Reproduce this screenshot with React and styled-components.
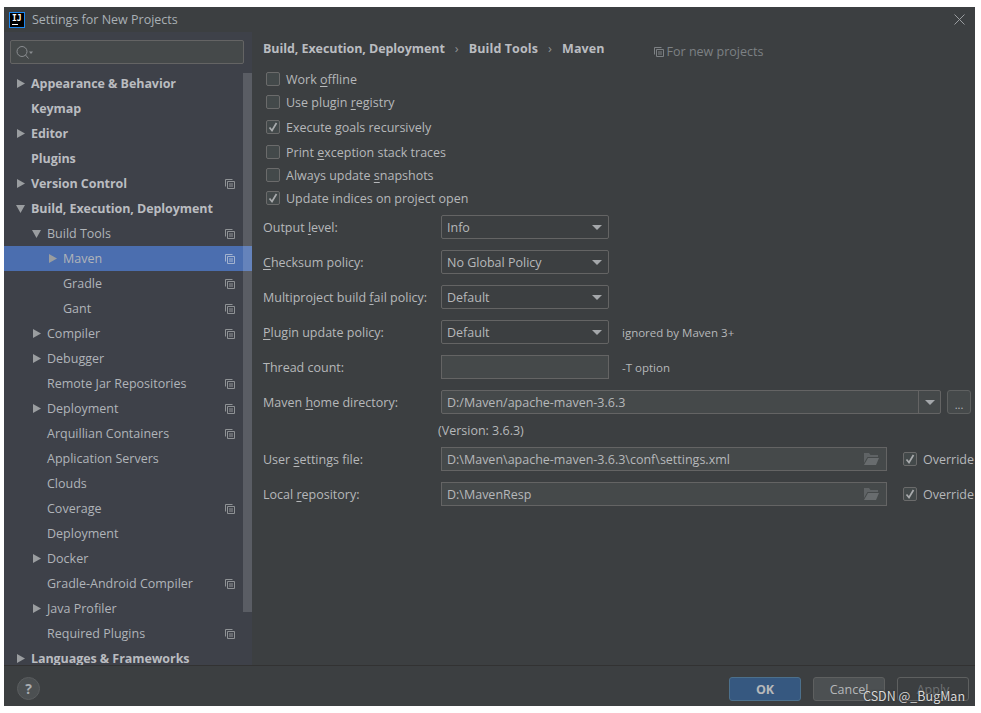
import React from "react";
import styled, { createGlobalStyle } from "styled-components";

const GlobalStyle = createGlobalStyle`
  html, body {
    margin: 0;
    padding: 0;
    background: #fff;
    height: 100%;
    overflow: hidden;
  }
  * {
    box-sizing: border-box;
  }
`;

const treeItems = [
  { label: "Appearance & Behavior", level: 0, bold: true, arrow: "right" },
  { label: "Keymap", level: 0, bold: true },
  { label: "Editor", level: 0, bold: true, arrow: "right" },
  { label: "Plugins", level: 0, bold: true },
  { label: "Version Control", level: 0, bold: true, arrow: "right", copy: true },
  { label: "Build, Execution, Deployment", level: 0, bold: true, arrow: "down" },
  { label: "Build Tools", level: 1, arrow: "down", copy: true },
  { label: "Maven", level: 2, arrow: "right", copy: true, selected: true },
  { label: "Gradle", level: 2, copy: true },
  { label: "Gant", level: 2, copy: true },
  { label: "Compiler", level: 1, arrow: "right", copy: true },
  { label: "Debugger", level: 1, arrow: "right" },
  { label: "Remote Jar Repositories", level: 1, copy: true },
  { label: "Deployment", level: 1, arrow: "right", copy: true },
  { label: "Arquillian Containers", level: 1, copy: true },
  { label: "Application Servers", level: 1 },
  { label: "Clouds", level: 1 },
  { label: "Coverage", level: 1, copy: true },
  { label: "Deployment", level: 1 },
  { label: "Docker", level: 1, arrow: "right" },
  { label: "Gradle-Android Compiler", level: 1, copy: true },
  { label: "Java Profiler", level: 1, arrow: "right" },
  { label: "Required Plugins", level: 1, copy: true },
  { label: "Languages & Frameworks", level: 0, bold: true, arrow: "right" },
];

const FONT = `"Open Sans", "Noto Sans", sans-serif`;

const Page = styled.div`
  width: 981px;
  height: 713px;
  padding: 7px 6px 7px 4px;
  position: relative;
  font-family: ${FONT};
  font-size: 12.5px;
  color: #b6b8ba;
`;

const Dialog = styled.div`
  width: 971px;
  height: 699px;
  background: #3c3f41;
  display: flex;
  flex-direction: column;
  overflow: hidden;
`;

const TitleBar = styled.div`
  height: 25px;
  flex: none;
  display: flex;
  align-items: center;
  padding: 0 10px 0 5px;
  gap: 7px;
`;

const Logo = styled.div`
  width: 16px;
  height: 16px;
  background: #000;
  border: 1px solid #1c87f0;
  color: #fff;
  font: bold 8px/9px "DejaVu Sans Mono", monospace;
  padding: 1px 0 0 2px;
  position: relative;
  &::after {
    content: "";
    position: absolute;
    left: 2px;
    bottom: 2px;
    width: 6px;
    height: 1px;
    background: #fff;
  }
`;

const Title = styled.div`
  flex: 1;
  font-size: 12.5px;
  margin-top: -1px;
  color: #a9b0b5;
`;

const Body = styled.div`
  flex: 1;
  min-height: 0;
  display: flex;
`;

const Sidebar = styled.div`
  width: 248px;
  flex: none;
  background: #3e4149;
  padding-top: 8px;
  position: relative;
  overflow: hidden;
`;

const SearchBox = styled.div`
  height: 24px;
  width: 234px;
  margin: 0 0 7px 6px;
  background: #45494a;
  border: 1px solid #646464;
  border-radius: 2px;
  display: flex;
  align-items: center;
  padding-left: 5px;
`;

const Row = styled.div`
  height: 25px;
  display: flex;
  align-items: center;
  padding-left: ${(p) => 12 + p.$level * 16}px;
  padding-right: 17px;
  background: ${(p) => (p.$selected ? "#4b6eaf" : "transparent")};
  font-weight: ${(p) => (p.$bold ? 700 : 400)};
  letter-spacing: ${(p) => (p.$bold ? "-0.07px" : "0")};
  color: ${(p) => (p.$bold ? "#babcc0" : "#b0b4b9")};
`;

const ArrowSlot = styled.span`
  width: 15px;
  flex: none;
  display: flex;
  align-items: center;
`;

const RowLabel = styled.span`
  flex: 1;
  white-space: nowrap;
`;

const ScrollThumb = styled.div`
  position: absolute;
  left: 239px;
  top: 41px;
  width: 9px;
  height: 539px;
  background: rgba(255, 255, 255, 0.15);
`;

const Content = styled.div`
  flex: 1;
  min-width: 0;
  padding-left: 11px;
  overflow: hidden;
`;

const Header = styled.div`
  height: 32px;
  margin-bottom: 4px;
  display: flex;
  align-items: center;
  white-space: nowrap;
`;

const Crumb = styled.span`
  font-weight: 700;
  letter-spacing: ${(p) => (p.$tight ? "-0.07px" : "0.1px")};
  color: #babcc0;
`;

const CrumbSep = styled.span`
  width: 24px;
  text-align: center;
  color: #8d9194;
  font-size: 13px;
`;

const ProjectNote = styled.span`
  margin-left: 49px;
  margin-top: 7px;
  display: flex;
  align-items: center;
  gap: 3px;
  color: #7d8184;
`;

const CheckRow = styled.label`
  height: 22px;
  margin-top: ${(p) => p.$mt || 0}px;
  margin-left: ${(p) => (p.$inline ? 0 : 3)}px;
  display: flex;
  align-items: center;
  gap: 6px;
  white-space: nowrap;
`;

const Box = styled.span`
  width: 14px;
  height: 14px;
  flex: none;
  border: 1px solid #6b6b6b;
  border-radius: 2px;
  background: #43494a;
  display: flex;
  align-items: center;
  justify-content: center;
`;

const Mn = styled.u`
  text-underline-offset: 2px;
  text-decoration-thickness: 1px;
`;

const Form = styled.div`
  margin-top: 6px;
`;

const FormRow = styled.div`
  height: 24px;
  margin-bottom: 11px;
  display: flex;
  align-items: center;
  white-space: nowrap;
`;

const Label = styled.div`
  width: 178px;
  flex: none;
`;

const Field = styled.div`
  width: ${(p) => p.$width}px;
  height: 24px;
  flex: none;
  background: ${(p) => (p.$flat ? "#3c3f41" : "#45494a")};
  border: 1px solid #646464;
  border-radius: ${(p) => (p.$square ? 0 : 2)}px;
  display: flex;
  align-items: center;
  padding-left: 5px;
`;

const FieldText = styled.span`
  flex: 1;
`;

const ComboArrow = styled.span`
  width: 22px;
  height: 100%;
  flex: none;
  display: flex;
  align-items: center;
  justify-content: center;
  border-left: ${(p) => (p.$divided ? "1px solid #646464" : "none")};
`;

const Hint = styled.span`
  margin-left: 13px;
  font-size: 11.5px;
`;

const Browse = styled.div`
  width: 24px;
  height: 24px;
  flex: none;
  margin-left: 6px;
  background: #45494a;
  border: 1px solid #5e6060;
  border-radius: 3px;
  display: flex;
  align-items: center;
  justify-content: center;
  padding-top: 4px;
  font-size: 11px;
`;

const VersionRow = styled.div`
  height: 22px;
  margin: -6px 0 6px 175px;
  display: flex;
  align-items: center;
`;

const FolderSlot = styled.span`
  width: 22px;
  flex: none;
  display: flex;
  align-items: center;
`;

const OverrideWrap = styled.div`
  margin-left: 16px;
`;

const Footer = styled.div`
  height: 41px;
  flex: none;
  border-top: 1px solid #323232;
  padding: 11px 6px 0 13px;
  display: flex;
  align-items: flex-start;
  gap: 12px;
`;

const HelpButton = styled.div`
  width: 23px;
  height: 23px;
  border-radius: 50%;
  background: #4c5052;
  border: 1px solid #5a5d5f;
  margin-right: auto;
  display: flex;
  align-items: center;
  justify-content: center;
  font-weight: 700;
  font-size: 14px;
  color: #a9adb0;
`;

const Button = styled.div`
  width: 72px;
  height: 24px;
  border-radius: 3px;
  display: flex;
  align-items: center;
  justify-content: center;
  background: ${(p) => (p.$kind === "ok" ? "#365880" : p.$kind === "off" ? "#3c3f41" : "#4c5052")};
  border: 1px solid ${(p) => (p.$kind === "ok" ? "#4c708c" : "#5e6060")};
  color: ${(p) => (p.$kind === "off" ? "#6f7274" : "#b6b8ba")};
  font-weight: ${(p) => (p.$kind === "ok" ? 700 : 400)};
`;

const Watermark = styled.div`
  position: absolute;
  left: 863px;
  top: 687px;
  font-family: "Noto Sans CJK SC", "Noto Sans", sans-serif;
  font-size: 12.5px;
  line-height: 18px;
  color: #d8d8d8;
  text-shadow: 0 0 2px #222;
  white-space: nowrap;
`;

const Arrow = ({ dir }) => (
  <svg width="9" height="9" viewBox="0 0 9 9">
    {dir === "down" ? (
      <path d="M0 1h9L4.5 9z" fill="#9a9da0" />
    ) : (
      <path d="M1 0l8 4.5L1 9z" fill="#9a9da0" />
    )}
  </svg>
);

const CopyIcon = ({ color = "#8f9295" }) => (
  <svg width="10" height="10" viewBox="0 0 10 10" fill="none" stroke={color} strokeWidth="1">
    <path d="M.5 7.5V.5h7" />
    <path d="M2.5 2.5h7v7h-7z" />
    <path d="M4 5h4M4 7h4" />
  </svg>
);

const Caret = ({ color = "#a4a7aa" }) => (
  <svg width="10" height="5" viewBox="0 0 10 5">
    <path d="M0 0h10L5 5z" fill={color} />
  </svg>
);

const SearchIcon = () => (
  <svg width="18" height="13" viewBox="0 0 18 13" fill="none">
    <circle cx="6" cy="5.5" r="5" stroke="#8a8d90" />
    <path d="M9.5 9l3 3.5" stroke="#8a8d90" />
    <path d="M13 5.5h4l-2 2.5z" fill="#8a8d90" />
  </svg>
);

const CheckMark = () => (
  <svg width="10" height="10" viewBox="0 0 10 10" fill="none">
    <path d="M1.5 5.5L4 8.5 8.5 1" stroke="#a9abad" strokeWidth="1.7" />
  </svg>
);

const FolderIcon = () => (
  <svg width="15" height="12" viewBox="0 0 15 12">
    <path d="M0 0h5l1.5 2H14v2H3.5L0 10z" fill="#5f6365" />
    <path d="M4 5h11l-3 7H0z" fill="#686c6e" />
  </svg>
);

const CloseIcon = () => (
  <svg width="11" height="11" viewBox="0 0 11 11" stroke="#9a9da0" strokeWidth="1">
    <path d="M.5.5l10 10M10.5.5l-10 10" />
  </svg>
);

const Check = ({ checked, mt, inline, children }) => (
  <CheckRow $mt={mt} $inline={inline}>
    <Box>{checked && <CheckMark />}</Box>
    <span>{children}</span>
  </CheckRow>
);

const Combo = ({ value, hint }) => (
  <>
    <Field $width={168} $flat>
      <FieldText>{value}</FieldText>
      <ComboArrow>
        <Caret />
      </ComboArrow>
    </Field>
    {hint && <Hint>{hint}</Hint>}
  </>
);

const PathField = ({ value }) => (
  <>
    <Field $width={446} $square>
      <FieldText>{value}</FieldText>
      <FolderSlot>
        <FolderIcon />
      </FolderSlot>
    </Field>
    <OverrideWrap>
      <Check checked inline>
        Override
      </Check>
    </OverrideWrap>
  </>
);

export default function App() {
  return (
    <Page>
      <GlobalStyle />
      <Dialog>
        <TitleBar>
          <Logo>IJ</Logo>
          <Title>Settings for New Projects</Title>
          <CloseIcon />
        </TitleBar>
        <Body>
          <Sidebar>
            <SearchBox>
              <SearchIcon />
            </SearchBox>
            {treeItems.map((item, i) => (
              <Row key={i} $level={item.level} $bold={item.bold} $selected={item.selected}>
                <ArrowSlot>{item.arrow && <Arrow dir={item.arrow} />}</ArrowSlot>
                <RowLabel>{item.label}</RowLabel>
                {item.copy && <CopyIcon color={item.selected ? "#a3b3cf" : "#8f9295"} />}
              </Row>
            ))}
            <ScrollThumb />
          </Sidebar>
          <Content>
            <Header>
              <Crumb $tight>Build, Execution, Deployment</Crumb>
              <CrumbSep>›</CrumbSep>
              <Crumb>Build Tools</Crumb>
              <CrumbSep>›</CrumbSep>
              <Crumb>Maven</Crumb>
              <ProjectNote>
                <CopyIcon color="#7d8184" />
                For new projects
              </ProjectNote>
            </Header>
            <Check>
              Work <Mn>o</Mn>ffline
            </Check>
            <Check mt={1}>
              Use plugin <Mn>r</Mn>egistry
            </Check>
            <Check checked mt={3}>
              Execute <Mn>g</Mn>oals recursively
            </Check>
            <Check mt={3}>
              Print <Mn>e</Mn>xception stack traces
            </Check>
            <Check mt={1}>
              Always update <Mn>s</Mn>napshots
            </Check>
            <Check checked mt={1}>
              Update indices on project open
            </Check>
            <Form>
              <FormRow>
                <Label>
                  Output <Mn>l</Mn>evel:
                </Label>
                <Combo value="Info" />
              </FormRow>
              <FormRow>
                <Label>
                  <Mn>C</Mn>hecksum policy:
                </Label>
                <Combo value="No Global Policy" />
              </FormRow>
              <FormRow>
                <Label>
                  Multiproject build <Mn>f</Mn>ail policy:
                </Label>
                <Combo value="Default" />
              </FormRow>
              <FormRow>
                <Label>
                  <Mn>P</Mn>lugin update policy:
                </Label>
                <Combo value="Default" hint="ignored by Maven 3+" />
              </FormRow>
              <FormRow>
                <Label>Thread count:</Label>
                <Field $width={168} $square />
                <Hint>-T option</Hint>
              </FormRow>
              <FormRow>
                <Label>
                  Maven <Mn>h</Mn>ome directory:
                </Label>
                <Field $width={500}>
                  <FieldText>D:/Maven/apache-maven-3.6.3</FieldText>
                  <ComboArrow $divided>
                    <Caret />
                  </ComboArrow>
                </Field>
                <Browse>...</Browse>
              </FormRow>
              <VersionRow>(Version: 3.6.3)</VersionRow>
              <FormRow>
                <Label>
                  User <Mn>s</Mn>ettings file:
                </Label>
                <PathField value="D:\Maven\apache-maven-3.6.3\conf\settings.xml" />
              </FormRow>
              <FormRow>
                <Label>
                  Local <Mn>r</Mn>epository:
                </Label>
                <PathField value="D:\MavenResp" />
              </FormRow>
            </Form>
          </Content>
        </Body>
        <Footer>
          <HelpButton>?</HelpButton>
          <Button $kind="ok">OK</Button>
          <Button>Cancel</Button>
          <Button $kind="off">Apply</Button>
        </Footer>
      </Dialog>
      <Watermark>CSDN @_BugMan</Watermark>
    </Page>
  );
}
